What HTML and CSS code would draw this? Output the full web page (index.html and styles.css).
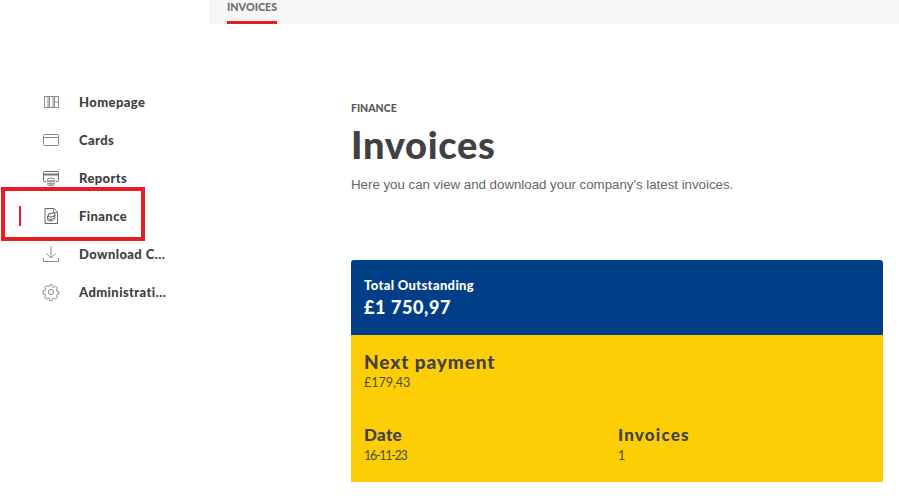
FILE: index.html
```html
<!DOCTYPE html>
<html lang="en">
<head>
<meta charset="utf-8">
<title>Invoices</title>
<link rel="stylesheet" href="styles.css">
</head>
<body>
<div class="page">
  <aside class="sidebar">
    <nav class="nav">
      <a class="nav-item">
        <svg class="icon" viewBox="0 0 16 16"><path d="M1.500 2.500h14v11h-14zM5 2.500v11M6.500 2.500v11M10 2.500v11M11.500 2.500v11M12 8h3.500"/></svg>
        <span class="nav-label">Homepage</span>
      </a>
      <a class="nav-item">
        <svg class="icon" viewBox="0 0 16 16"><rect x=".5" y="2.500" width="15" height="11" rx="1"/><path d="M.5 5.500h15"/></svg>
        <span class="nav-label">Cards</span>
      </a>
      <a class="nav-item">
        <svg class="icon" viewBox="0 0 16 16"><path class="dark" d="M3 11.500H1.500a1 1 0 0 1-1-1v-8a1 1 0 0 1 1-1h13a1 1 0 0 1 1 1v8a1 1 0 0 1-1 1H13"/><path class="thick" d="M.5 4.500h15"/><ellipse cx="8" cy="10" rx="4" ry="1.800"/><ellipse cx="8" cy="12.500" rx="4" ry="1.800"/><ellipse cx="8" cy="14.500" rx="3.500" ry="1.300"/></svg>
        <span class="nav-label">Reports</span>
      </a>
      <a class="nav-item is-active">
        <svg class="icon" viewBox="0 0 16 16"><path class="dark" d="M2 .5h9l3.500 3.500v11.500H2z"/><path d="M10.500.5v4h4"/><ellipse class="dark" cx="8.500" cy="7" rx="3.600" ry="1.800" transform="rotate(-15 8.500 7)"/><path class="dark" d="M4.500 8v3.500c0 1 1.500 1.600 3.500 1.300s3.800-1.300 3.800-2.300V7M4.500 10c0 1 1.500 1.600 3.500 1.300s3.800-1.300 3.800-2.300"/></svg>
        <span class="nav-label">Finance</span>
      </a>
      <a class="nav-item">
        <svg class="icon" viewBox="0 0 16 16"><path d="M8 .5v11M3.500 7.500 8 12l4.500-4.500M.5 12v3.500h15V12"/></svg>
        <span class="nav-label">Download Cards</span>
      </a>
      <a class="nav-item">
        <svg class="icon" viewBox="0 0 16 16"><circle cx="8" cy="8" r="2.600"/><path d="M6.800.8h2.400l.4 2 1.300.6 1.800-1.100 1.700 1.700-1.100 1.800.6 1.300 2 .4v2.400l-2 .4-.6 1.300 1.100 1.800-1.700 1.700-1.800-1.100-1.300.6-.4 2H6.800l-.4-2-1.300-.6-1.800 1.100-1.700-1.700 1.100-1.800-.6-1.300-2-.4V6.800l2-.4.600-1.300-1.100-1.800 1.700-1.700 1.800 1.100 1.300-.6z"/></svg>
        <span class="nav-label">Administration</span>
      </a>
    </nav>
  </aside>
  <div class="main">
    <div class="tabs"><a class="tab">INVOICES</a></div>
    <main class="content">
      <p class="eyebrow">FINANCE</p>
      <h1 class="title">Invoices</h1>
      <p class="intro">Here you can view and download your company's latest invoices.</p>
      <section class="card">
        <div class="card-head">
          <div class="head-label">Total Outstanding</div>
          <div class="head-value">£1 750,97</div>
        </div>
        <div class="card-body">
          <div class="next">
            <div class="field-label">Next payment</div>
            <div class="field-value">£179,43</div>
          </div>
          <div class="fields">
            <div>
              <div class="field-label date-label">Date</div>
              <div class="field-value date-value">16-11-23</div>
            </div>
            <div>
              <div class="field-label count-label">Invoices</div>
              <div class="field-value">1</div>
            </div>
          </div>
        </div>
      </section>
    </main>
  </div>
</div>
<div class="highlight"></div>
</body>
</html>
```

FILE: styles.css
```css
* { box-sizing: border-box; }
html, body { margin: 0; padding: 0; height: 100%; overflow: hidden; background: #fff; }
body { font-family: "Lato", "Liberation Sans", sans-serif; color: #414042; }

.page { display: flex; width: 899px; height: 502px; }

.sidebar { width: 209px; flex: none; padding-top: 83px; }
.nav { display: flex; flex-direction: column; }
.nav-item {
  position: relative;
  display: flex;
  align-items: center;
  gap: 20px;
  height: 38px;
  padding-left: 43px;
}
.icon { width: 16px; height: 16px; flex: none; fill: none; stroke: #8a8a8a; stroke-width: 1; overflow: visible; }
.icon .thick { stroke-width: 2; stroke: #777; }
.icon .dark { stroke: #666; }
.nav-label {
  width: 88px;
  font-size: 13px;
  font-weight: 900;
  letter-spacing: .4px;
  white-space: nowrap;
  overflow: hidden;
  text-overflow: ellipsis;
}
.nav-item.is-active::before {
  content: "";
  position: absolute;
  left: 19px;
  top: 9px;
  width: 2px;
  height: 20px;
  background: #e41f26;
}

.main { flex: 1; min-width: 0; }
.tabs { display: flex; height: 24px; background: #f6f6f6; padding-left: 18px; }
.tab {
  display: block;
  height: 24px;
  border-bottom: 3px solid #e41f26;
  font-size: 10.8px;
  line-height: 13px;
  font-weight: 900;
  color: #6f6f6f;
}

.content { padding: 77px 16px 0 142px; }
.eyebrow { margin: 0; font-size: 10.5px; line-height: 14px; font-weight: 900; color: #58585a; }
.title { margin: 6px 0 0; font-size: 38px; line-height: 46px; font-weight: 900; color: #414042; letter-spacing: .7px; }
.intro { margin: 9px 0 0; font-family: "Liberation Sans", sans-serif; font-size: 13.33px; line-height: 17px; letter-spacing: -.03px; color: #666; }

.card { margin-top: 67px; border-radius: 3px 3px 0 0; overflow: hidden; }
.card-head { height: 75px; background: #003f88; color: #fff; padding: 17px 13px 0; }
.head-label { font-size: 13px; line-height: 16px; font-weight: 900; letter-spacing: .35px; }
.head-value { margin-top: 3px; font-size: 18px; line-height: 22px; font-weight: 900; letter-spacing: .6px; }
.card-body { height: 147px; background: #fdce06; padding: 16px 13px 0; }
.field-label { font-size: 19px; line-height: 22px; font-weight: 900; color: #414042; letter-spacing: .9px; }
.date-label { font-size: 17px; letter-spacing: .3px; }
.count-label { font-size: 17px; letter-spacing: 1.2px; }
.field-value { margin-top: 2px; font-size: 12.5px; line-height: 16px; color: #4a4f2e; }
.date-value { letter-spacing: -1.3px; }
.fields { display: grid; grid-template-columns: 254px 1fr; margin-top: 33px; }

.highlight {
  position: absolute;
  left: 1px;
  top: 187px;
  width: 144px;
  height: 54px;
  border: 4px solid #e91c24;
}
```
